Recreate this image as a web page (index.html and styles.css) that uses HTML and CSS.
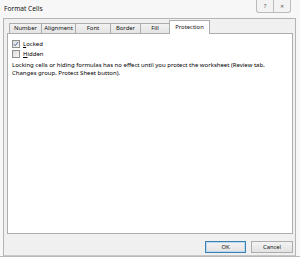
FILE: index.html
```html
<!DOCTYPE html>
<html lang="en">
<head>
    <meta charset="UTF-8">
    <title>Format Cells</title>
    <link rel="stylesheet" href="styles.css">
</head>
<body>
    <div class="window">
        <div class="titlebar">
            <span class="title">Format Cells</span>
            <div class="caption-buttons">
                <div class="caption-btn">?</div>
                <div class="caption-btn close">&#x2715;</div>
            </div>
        </div>
        <div class="client">
            <!-- Tabs -->
            <div class="tabs">
                <div class="tab">Number</div>
                <div class="tab">Alignment</div>
                <div class="tab">Font</div>
                <div class="tab">Border</div>
                <div class="tab">Fill</div>
                <div class="tab active">Protection</div>
            </div>
            <div class="panel">
                <label class="check-row">
                    <span class="checkbox checked">
                        <svg viewBox="0 0 8 8" width="6" height="6"><path d="M1 4.2 L3 6.2 L7 1.2" fill="none" stroke="#3a5a8c" stroke-width="1.2"/></svg>
                    </span>
                    <span><u>L</u>ocked</span>
                </label>
                <label class="check-row">
                    <span class="checkbox"></span>
                    <span><u>H</u>idden</span>
                </label>
                <p class="note">Locking cells or hiding formulas has no effect until you protect the worksheet (Review tab, Changes group, Protect Sheet button).</p>
            </div>
            <div class="buttons">
                <div class="btn default">OK</div>
                <div class="btn">Cancel</div>
            </div>
        </div>
    </div>
</body>
</html>
```

FILE: styles.css
```css
* {
    margin: 0;
    padding: 0;
    box-sizing: border-box;
}

body {
    width: 300px;
    height: 261px;
    background: #ffffff;
    font-family: 'Noto Sans', 'Open Sans', sans-serif;
    color: #000;
    overflow: hidden;
}

.window {
    width: 300px;
    height: 257px;
    background: #f7f7f7;
    border-bottom: 1px solid #b9b9b9;
}

.titlebar {
    height: 18px;
    display: flex;
    justify-content: space-between;
    align-items: flex-start;
    padding-left: 4px;
}

.title {
    font-size: 6.6px;
    line-height: 17px;
    color: #111;
}

.caption-buttons {
    display: flex;
    margin-right: 9px;
}

.caption-btn {
    width: 18px;
    height: 13px;
    border: 1px solid #bcbcbc;
    border-top: none;
    background: #f3f3f3;
    font-size: 6px;
    line-height: 12px;
    text-align: center;
    color: #555;
}

.caption-btn.close {
    width: 17px;
    border-left: none;
    border-radius: 0 0 3px 0;
    font-size: 5px;
}

.caption-btn:first-child {
    border-radius: 0 0 0 3px;
}

.client {
    margin: 0 4px 0 3px;
    height: 238px;
    background: #f0f0f0;
    border: 1px solid #b4b4b4;
    border-bottom-color: #c8c8c8;
    padding: 3px 2px 0 3px;
}

.tabs {
    display: flex;
    align-items: flex-end;
    height: 11px;
    padding-left: 2px;
    position: relative;
    z-index: 1;
}

.tab {
    height: 10px;
    font-size: 5.9px;
    line-height: 9px;
    text-align: center;
    color: #111;
    border: 1px solid #adadad;
    border-bottom: none;
    border-right: none;
    background: linear-gradient(#f2f2f2, #e4e4e4);
}

.tab:nth-child(1) { width: 32px; }
.tab:nth-child(2) { width: 34px; }
.tab:nth-child(3) { width: 35px; }
.tab:nth-child(4) { width: 30px; }
.tab:nth-child(5) { width: 29px; }

.tab.active {
    width: 41px;
    height: 14px;
    margin-bottom: -1px;
    background: #ffffff;
    border: 1px solid #adadad;
    border-bottom: none;
    line-height: 12px;
}

.panel {
    height: 201px;
    background: #ffffff;
    border: 1px solid #adadad;
    padding: 5px 4px;
    font-size: 6px;
}

.check-row {
    display: flex;
    align-items: center;
    gap: 3px;
    height: 9px;
    margin-bottom: 1px;
}

.checkbox {
    width: 8px;
    height: 8px;
    border: 1px solid #8e8f8f;
    background: linear-gradient(135deg, #dcdcdc, #f6f6f6);
    display: flex;
    align-items: center;
    justify-content: center;
}

.note {
    margin-top: 3px;
    line-height: 8px;
    color: #000;
    width: 272px;
}

.buttons {
    display: flex;
    justify-content: flex-end;
    gap: 5px;
    padding-top: 7px;
    padding-right: 0;
}

.btn {
    width: 41px;
    height: 12px;
    border: 1px solid #adadad;
    background: linear-gradient(#f2f2f2, #e3e3e3);
    font-size: 5.8px;
    line-height: 10px;
    text-align: center;
    color: #111;
}

.btn.default {
    border-color: #3c7fb1;
    box-shadow: inset 0 0 0 1px #b9daf3;
}

.btn:last-child {
    width: 42px;
}
```
